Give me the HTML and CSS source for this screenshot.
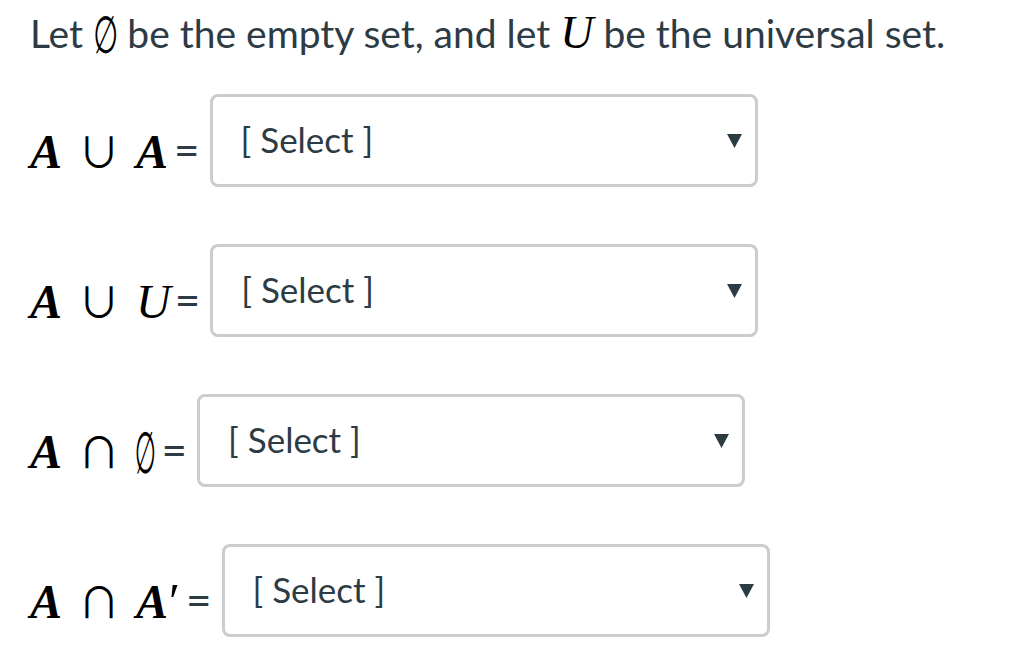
FILE: index.html
```html
<!DOCTYPE html>
<html lang="en">
<head>
<meta charset="utf-8">
<title>Sets</title>
<link rel="stylesheet" href="styles.css">
</head>
<body>
<div class="page">
  <p class="intro">Let <span class="empty">∅</span> be the empty set, and let <span class="mi-u">U</span> be the universal set.</p>

  <div class="row">
    <div class="label"><span class="mi">A</span><span class="mo">∪</span><span class="mi">A</span><span class="eq">=</span></div>
    <div class="select"><span class="select-text">[ Select ]</span><svg class="caret" width="15" height="15" viewBox="0 0 15 15"><path d="M0 1 H15 L7.5 15 Z" fill="#2d3b45"/></svg></div>
  </div>

  <div class="row">
    <div class="label"><span class="mi">A</span><span class="mo">∪</span><span class="mi mi-reg">U</span><span class="eq eq-tight">=</span></div>
    <div class="select"><span class="select-text">[ Select ]</span><svg class="caret" width="15" height="15" viewBox="0 0 15 15"><path d="M0 1 H15 L7.5 15 Z" fill="#2d3b45"/></svg></div>
  </div>

  <div class="row">
    <div class="label"><span class="mi">A</span><span class="mo">∩</span><span class="empty-m">∅</span><span class="eq">=</span></div>
    <div class="select"><span class="select-text">[ Select ]</span><svg class="caret" width="15" height="15" viewBox="0 0 15 15"><path d="M0 1 H15 L7.5 15 Z" fill="#2d3b45"/></svg></div>
  </div>

  <div class="row">
    <div class="label"><span class="mi">A</span><span class="mo">∩</span><span class="mi">A</span><span class="prime">′</span><span class="eq">=</span></div>
    <div class="select"><span class="select-text">[ Select ]</span><svg class="caret" width="15" height="15" viewBox="0 0 15 15"><path d="M0 1 H15 L7.5 15 Z" fill="#2d3b45"/></svg></div>
  </div>
</div>
</body>
</html>
```

FILE: styles.css
```css
html, body {
  margin: 0;
  padding: 0;
  background: #ffffff;
}

.page {
  padding: 7px 0 0 30px;
  font-family: Lato, "Liberation Sans", sans-serif;
  color: #2d3b45;
}

.intro {
  margin: 0 0 37px 0;
  font-size: 39px;
  line-height: 47px;
  white-space: nowrap;
}

.empty {
  display: inline-block;
  font-family: "DejaVu Sans", sans-serif;
  font-size: 52px;
  color: #000;
  transform: translateY(5px) scaleX(0.55);
  margin: 0 -11px 0 -10px;
}

.mi-u {
  font-family: "Liberation Serif", serif;
  font-style: italic;
  font-size: 46px;
  color: #000;
}

.row {
  display: flex;
  align-items: flex-start;
  gap: 10px;
  margin-bottom: 57px;
}

.row:last-child {
  margin-bottom: 0;
}

.label {
  padding-top: 33px;
  font-family: "DejaVu Sans", sans-serif;
  font-size: 60px;
  line-height: 40px;
  white-space: nowrap;
  color: #000;
}

.mi {
  font-family: "Liberation Serif", serif;
  font-weight: bold;
  font-style: italic;
  font-size: 48px;
}

.mi-reg {
  font-weight: normal;
  font-size: 48px;
}

.mo {
  font-family: "Noto Sans CJK SC", sans-serif;
  font-size: 42px;
  margin: 0 16px 0 16px;
}

.empty-m {
  display: inline-block;
  font-family: "DejaVu Sans", sans-serif;
  font-size: 58px;
  transform: translateY(5px) scaleX(0.42);
  margin: 0 -15px 0 -16px;
}

.prime {
  font-family: "Liberation Serif", serif;
  font-size: 50px;
  margin-left: 1px;
}

.eq {
  font-family: Lato, "Liberation Sans", sans-serif;
  font-size: 44px;
  color: #2d3b45;
  margin-left: 6px;
  vertical-align: 2px;
}

.eq-tight {
  margin-left: 4px;
}

.select {
  box-sizing: border-box;
  width: 548px;
  height: 93px;
  border: 3px solid #cccccc;
  border-radius: 8px;
  display: flex;
  align-items: center;
  justify-content: space-between;
  padding: 0 13px 0 28px;
}

.select-text {
  font-size: 35px;
  color: #2d3b45;
  margin-top: -3px;
}

.caret {
  display: block;
}
```
